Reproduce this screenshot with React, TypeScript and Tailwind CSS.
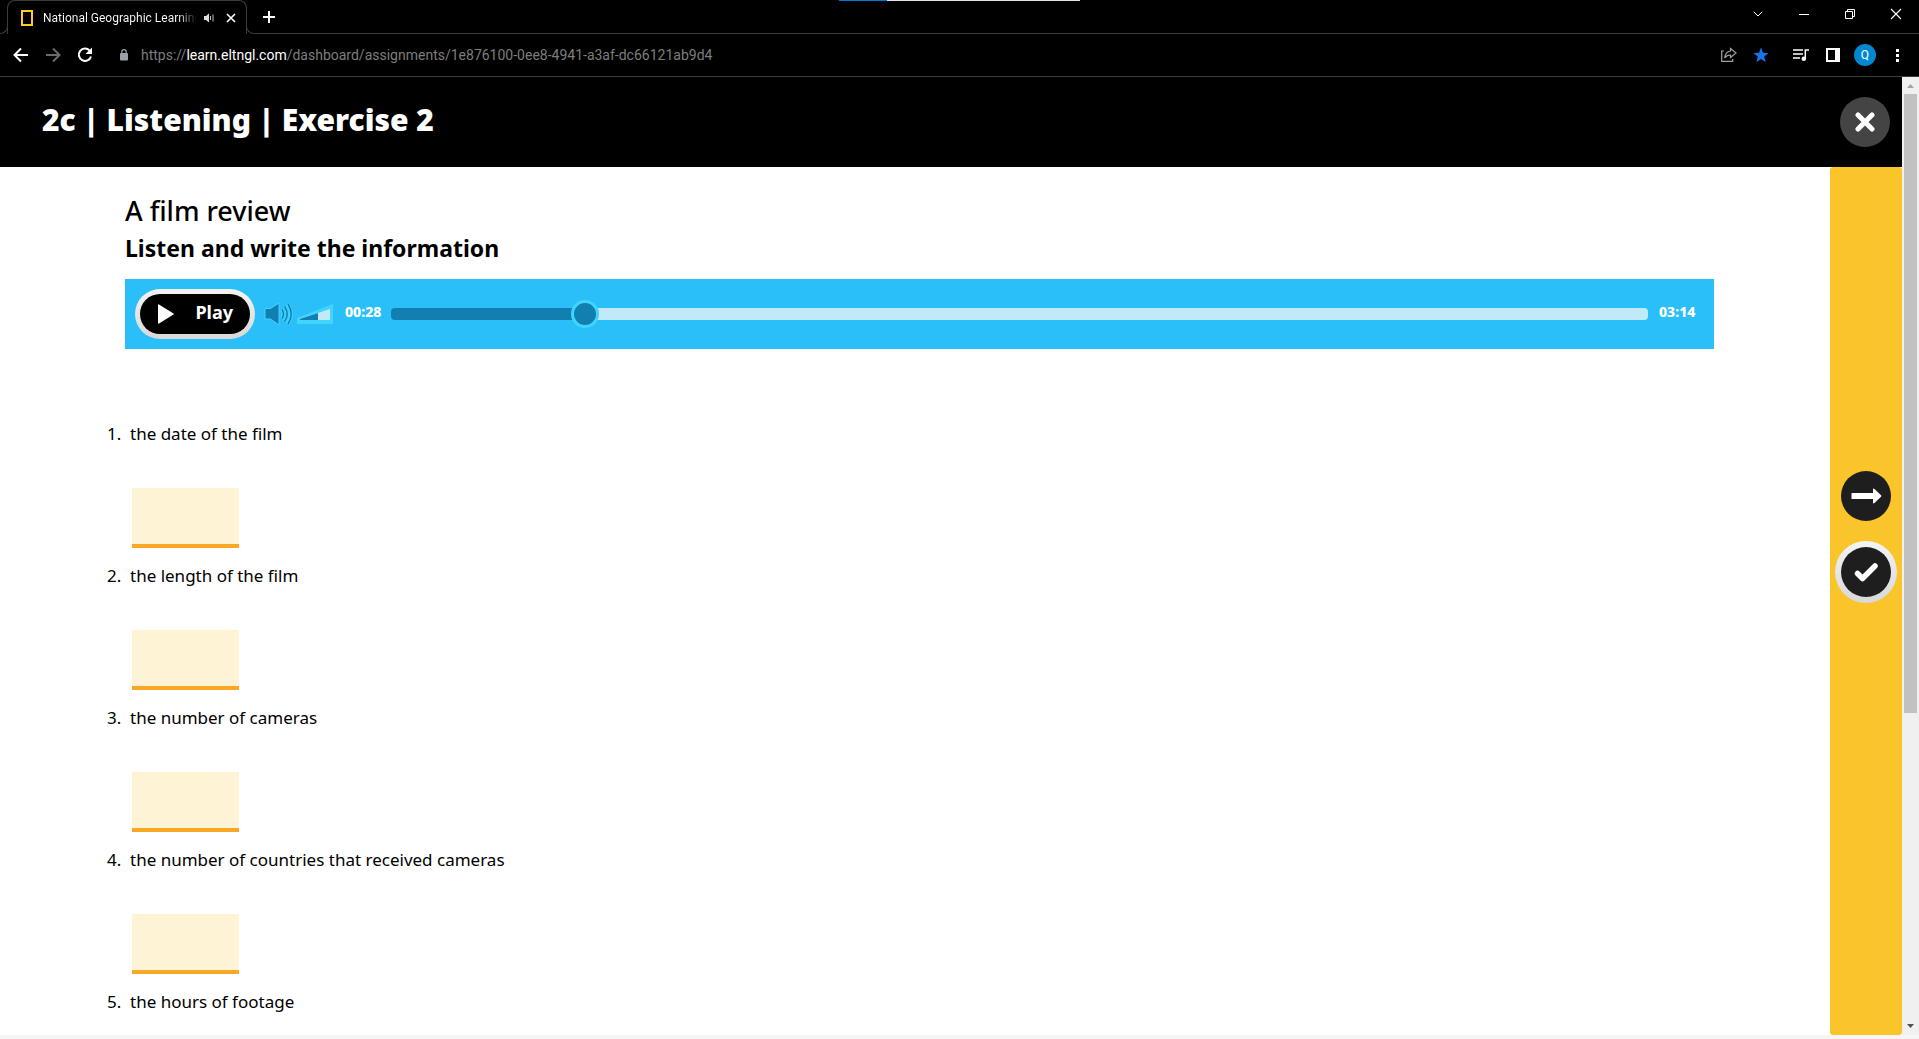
import { useState } from 'react'
import { ChevronDown } from 'lucide-react'

const QUESTIONS = [
  'the date of the film',
  'the length of the film',
  'the number of cameras',
  'the number of countries that received cameras',
  'the hours of footage',
]

const DURATION = 194

const formatTime = (seconds: number) => {
  const m = Math.floor(seconds / 60)
  const s = Math.floor(seconds % 60)
  return `${String(m).padStart(2, '0')}:${String(s).padStart(2, '0')}`
}

function TabStrip() {
  return (
    <div className="relative flex h-[34px] items-end text-white">
      <span className="h-2 w-[8px] rounded-br-lg border-r border-b border-[#3c3c3c]" />
      <div className="-ml-px flex h-[34px] w-[240px] items-center rounded-t-lg border-x border-t border-[#3c3c3c] pr-[10px] pl-[13px]">
        <span className="h-4 w-3 shrink-0 border-2 border-[#fc2]" />
        <span className="ml-[10px] w-[157px] shrink-0 bg-linear-to-r from-white from-86% to-transparent to-98% bg-clip-text font-[Roboto,sans-serif] text-xs whitespace-nowrap text-transparent">
          National Geographic Learning
        </span>
        <svg className="ml-1 h-[10px] w-[10px] shrink-0" viewBox="0 0 10 10" fill="none">
          <path d="M0 3h2l3-2.500v9L2 7H0z" fill="#ddd" />
          <path d="M6.500 3v4M9 1.500v7" stroke="#bbb" />
        </svg>
        <button aria-label="Close tab" className="ml-[12px] shrink-0">
          <svg className="h-[10px] w-[10px]" viewBox="0 0 10 10" stroke="white" strokeWidth="1.600">
            <path d="M1 1l8 8M9 1l-8 8" />
          </svg>
        </button>
      </div>
      <span className="-ml-px h-2 w-[8px] rounded-bl-lg border-b border-l border-[#3c3c3c]" />
      <div className="flex h-[34px] flex-1 items-center justify-between border-b border-[#3c3c3c] pb-[5px] pl-[9px]">
        <button aria-label="New tab">
          <svg className="mt-[5px] h-3 w-3" viewBox="0 0 12 12" stroke="white" strokeWidth="2">
            <path d="M6 0v12M0 6h12" />
          </svg>
        </button>
        <div className="flex items-center gap-[34px] pr-[17px]">
          <button aria-label="Search tabs" className="-mr-[2px]">
            <ChevronDown className="h-4 w-4" strokeWidth={1.5} />
          </button>
          <button aria-label="Minimize">
            <svg className="h-[12px] w-[12px]" viewBox="0 0 12 12" stroke="white">
              <path d="M1 6.500h10" />
            </svg>
          </button>
          <button aria-label="Restore">
            <svg className="h-[12px] w-[12px]" viewBox="0 0 12 12" fill="none" stroke="white">
              <path d="M1.500 3.500h7v7h-7zM3.500 3.500v-2h7v7h-2" />
            </svg>
          </button>
          <button aria-label="Close window">
            <svg className="h-[12px] w-[12px]" viewBox="0 0 12 12" stroke="white" strokeWidth="1.100">
              <path d="M1 1l10 10M11 1L1 11" />
            </svg>
          </button>
        </div>
      </div>
      <div className="absolute top-0 left-[839px] flex h-px w-[241px] bg-[#e5e5e5]">
        <span className="w-[48px] bg-[#0078d7]" />
      </div>
    </div>
  )
}

function Toolbar() {
  return (
    <div className="flex h-[43px] items-center border-b border-[#3c3c3c] pr-[14px] pl-[13px] text-white">
      <div className="flex items-center gap-4">
        <button aria-label="Back">
          <svg className="h-4 w-4" viewBox="0 0 16 16" fill="none" stroke="white" strokeWidth="2">
            <path d="M15 8H2M8 1.500L1.500 8 8 14.500" />
          </svg>
        </button>
        <button aria-label="Forward">
          <svg className="h-4 w-4" viewBox="0 0 16 16" fill="none" stroke="#6b6b6b" strokeWidth="2">
            <path d="M1 8h13M8 1.500L14.500 8 8 14.500" />
          </svg>
        </button>
        <button aria-label="Reload">
          <svg className="h-4 w-4" viewBox="0 0 16 16" fill="none">
            <path d="M12.700 3.600A6.200 6.200 0 1 0 14 9.500" stroke="white" strokeWidth="2" />
            <path d="M15 .5v6.500H8.500z" fill="white" />
          </svg>
        </button>
      </div>
      <svg className="ml-[27px] h-3 w-2" viewBox="0 0 8 12" fill="none">
        <path d="M1 4h6a1 1 0 0 1 1 1v5.500a1 1 0 0 1-1 1H1a1 1 0 0 1-1-1V5a1 1 0 0 1 1-1z" fill="#9aa0a6" />
        <path d="M1.800 5V2.800a2.200 2.200 0 0 1 4.400 0V5" stroke="#9aa0a6" strokeWidth="1.200" />
      </svg>
      <div className="ml-[13px] flex-1 font-[Roboto,sans-serif] text-sm text-[#7d7d7d]">
        https://<span className="text-white">learn.eltngl.com</span>
        /dashboard/assignments/1e876100-0ee8-4941-a3af-dc66121ab9d4
      </div>
      <div className="flex items-center">
        <button aria-label="Share">
          <svg className="h-4 w-4" viewBox="0 0 16 16" fill="none" stroke="#a0a0a0" strokeWidth="1.200">
            <path d="M3 4H.7v10.300h11V12" />
            <path d="M9.500 1.500L15 6l-5.500 4.500V8C7 8 5 9 3.700 11 4 7.500 6 4.500 9.500 4z" />
          </svg>
        </button>
        <button aria-label="Bookmark" className="ml-4">
          <svg className="h-4 w-4" viewBox="0 0 16 16" fill="#1a73e8">
            <path d="M8 .5l2 5.300 5.600.3-4.400 3.500 1.500 5.600L8 12.100l-4.700 3.100 1.500-5.600L.4 6.100 6 5.800z" />
          </svg>
        </button>
        <button aria-label="Media controls" className="ml-6">
          <svg className="h-4 w-4" viewBox="0 0 16 16" fill="none" stroke="white" strokeWidth="1.500">
            <path d="M0 3h10M0 7h10M0 11h7M12.300 11.500V3H16" />
            <circle cx="10.800" cy="11.800" r="2.300" fill="white" stroke="none" />
          </svg>
        </button>
        <button aria-label="Side panel" className="ml-[17px]">
          <svg className="h-[14px] w-[14px]" viewBox="0 0 14 14">
            <path d="M0 0h14v14H0z" fill="white" />
            <path d="M2 2h7v10H2z" fill="black" />
          </svg>
        </button>
        <button
          aria-label="Profile"
          className="ml-[14px] flex h-[22px] w-[22px] items-center justify-center rounded-full bg-[#0288d1] font-[Roboto,sans-serif] text-xs"
        >
          Q
        </button>
        <button aria-label="Menu" className="ml-[13px]">
          <svg className="h-4 w-4" viewBox="0 0 16 16" fill="white">
            <path d="M7 2h3v3H7zM7 7h3v3H7zM7 12h3v3H7z" />
          </svg>
        </button>
      </div>
    </div>
  )
}

function AudioPlayer() {
  const [time, setTime] = useState(28.4)
  const [volume, setVolume] = useState(60)
  const played = (time / DURATION) * 100 + 1

  return (
    <div className="flex h-[70px] items-center bg-[#2bbffa] pr-[18px] pl-[10px] text-white">
      <button className="flex h-[50px] w-[120px] shrink-0 items-center rounded-full bg-linear-to-b from-[#f4f4f4] to-[#d8d8d8] p-[5px]">
        <span className="flex h-full w-full items-center justify-between rounded-full bg-black pr-[17px] pl-[18px]">
          <svg className="h-5 w-4" viewBox="0 0 16 20" fill="white">
            <path d="M0 1Q0 0 1 .5L15.500 9.500q.7.500 0 1L1 19.500Q0 20 0 19z" />
          </svg>
          <span className="pb-1 text-lg leading-6 font-bold">Play</span>
        </span>
      </button>
      <button aria-label="Mute" className="ml-[9px] shrink-0">
        <svg className="h-6 w-[29px]" viewBox="0 0 29 24" fill="none">
          <path
            d="M17.500 7.500q3.500 4.500 0 9M20.500 4.500q5.500 7.500 0 15M23.500 2q7 10 0 20"
            stroke="#40d4ff"
            strokeWidth="3.500"
          />
          <path d="M1 6.500h5.500L15 1v22L6.500 17H1z" fill="#1180b0" stroke="#40d4ff" />
          <path d="M18 7.500q3 4.500 0 9M20.500 4.500q5.500 7.500 0 15M24 2q6.500 10 0 20" stroke="#1180b0" strokeWidth="1.500" />
        </svg>
      </button>
      <label className="relative ml-1 shrink-0">
        <svg className="h-5 w-9" viewBox="0 0 36 20">
          <path d="M0 14L36 0v20H0z" fill="#40d4ff" />
          <path d="M3 15L33 5v11H3z" fill="#c1eaf9" />
          <path d="M3 15l18-6v7H3z" fill="#1180b0" />
        </svg>
        <input
          type="range"
          aria-label="Volume"
          value={volume}
          onChange={(e) => setVolume(Number(e.target.value))}
          className="absolute inset-0 w-full opacity-0"
        />
      </label>
      <span className="ml-3 w-[46px] shrink-0 pb-1 text-sm font-extrabold">{formatTime(time)}</span>
      <input
        type="range"
        aria-label="Seek"
        min={0}
        max={DURATION}
        step={0.1}
        value={time}
        onChange={(e) => setTime(Number(e.target.value))}
        style={{ backgroundImage: `linear-gradient(to right, #1180b0 ${played}%, #c1eaf9 ${played}%)` }}
        className="h-3 min-w-0 flex-1 appearance-none rounded [&::-webkit-slider-thumb]:h-7 [&::-webkit-slider-thumb]:w-7 [&::-webkit-slider-thumb]:appearance-none [&::-webkit-slider-thumb]:rounded-full [&::-webkit-slider-thumb]:border-3 [&::-webkit-slider-thumb]:border-[#40d4ff] [&::-webkit-slider-thumb]:bg-[#1180b0]"
      />
      <span className="ml-[11px] w-[37px] shrink-0 pb-1 text-sm font-extrabold">{formatTime(DURATION)}</span>
    </div>
  )
}

function SideNav() {
  return (
    <nav className="flex w-[72px] shrink-0 flex-col items-center gap-5 rounded-[3px] bg-[#fac42b] pt-[304px]">
      <button
        aria-label="Next"
        className="flex h-[50px] w-[50px] shrink-0 items-center justify-center rounded-full bg-[#1e1e1e]"
      >
        <svg className="h-4 w-8" viewBox="0 0 32 16" fill="white">
          <path d="M2 5H23V1.500Q23 0 24.500 1L31 7.300q.8.700 0 1.400L24.500 15Q23 16 23 14.500V11H2Q1.500 11 1.500 10.500v-5Q1.500 5 2 5z" />
        </svg>
      </button>
      <button
        aria-label="Check answers"
        className="flex h-[62px] w-[62px] shrink-0 rounded-full bg-linear-to-b from-[#f4f4f4] to-[#d8d8d8] p-[6px]"
      >
        <span className="flex h-full w-full items-center justify-center rounded-full bg-[#1e1e1e]">
          <svg className="h-5 w-6" viewBox="0 0 24 20" fill="none" stroke="white" strokeWidth="5.500" strokeLinecap="round" strokeLinejoin="round">
            <path d="M3.500 11.500L8.500 16.500 21 4" />
          </svg>
        </span>
      </button>
    </nav>
  )
}

function Scrollbar() {
  return (
    <div className="flex w-[17px] shrink-0 flex-col items-center bg-[#f0f0f0]">
      <svg className="h-[17px] w-[17px] shrink-0" viewBox="0 0 17 17" fill="#a3a3a3">
        <path d="M5 11L8.500 7l3.500 4z" />
      </svg>
      <div className="flex min-h-0 w-[13px] flex-1 flex-col">
        <div className="h-[67%] bg-[#c1c1c1]" />
      </div>
      <svg className="h-[17px] w-[17px] shrink-0" viewBox="0 0 17 17" fill="#505050">
        <path d="M5 6l3.500 4L12 6z" />
      </svg>
    </div>
  )
}

export default function App() {
  return (
    <div className="flex h-screen flex-col overflow-hidden bg-[#f6f6f6] pb-1 font-['Noto_Sans',sans-serif]">
      <div className="shrink-0 bg-black">
        <TabStrip />
        <Toolbar />
      </div>
      <div className="flex min-h-0 flex-1">
        <div className="flex min-w-0 flex-1 flex-col bg-white">
          <header className="flex h-[90px] shrink-0 items-center justify-between bg-black pr-3 pl-[42px] text-white">
            <h1 className="pb-1 text-[30px] leading-10 font-black">2c | Listening | Exercise 2</h1>
            <button
              aria-label="Close exercise"
              className="flex h-[50px] w-[50px] items-center justify-center rounded-full bg-[#444]"
            >
              <svg className="h-5 w-5" viewBox="0 0 20 20" stroke="white" strokeWidth="5" strokeLinecap="round">
                <path d="M3 3l14 14M17 3L3 17" />
              </svg>
            </button>
          </header>
          <div className="flex min-h-0 flex-1">
            <main className="min-w-0 flex-1 overflow-hidden pt-[25px] pr-[116px] text-black">
              <div className="pl-[125px]">
                <h2 className="text-[27px] leading-[38px] font-medium">A film review</h2>
                <h3 className="mb-[13px] text-[23px] leading-9 font-bold">Listen and write the information</h3>
                <AudioPlayer />
              </div>
              <ol className="pt-[71px] pl-[107px] text-[17px] leading-7">
                {QUESTIONS.map((question, i) => (
                  <li key={question} className="h-[142px]">
                    <label htmlFor={`answer-${i}`} className="flex">
                      <span className="w-[23px]">{i + 1}.</span>
                      {question}
                    </label>
                    <input
                      id={`answer-${i}`}
                      type="text"
                      className="mt-10 ml-[25px] block h-[60px] w-[107px] border-b-4 border-[#f9a825] bg-[#fff3d5] px-2 outline-none"
                    />
                  </li>
                ))}
              </ol>
            </main>
            <SideNav />
          </div>
        </div>
        <Scrollbar />
      </div>
    </div>
  )
}
